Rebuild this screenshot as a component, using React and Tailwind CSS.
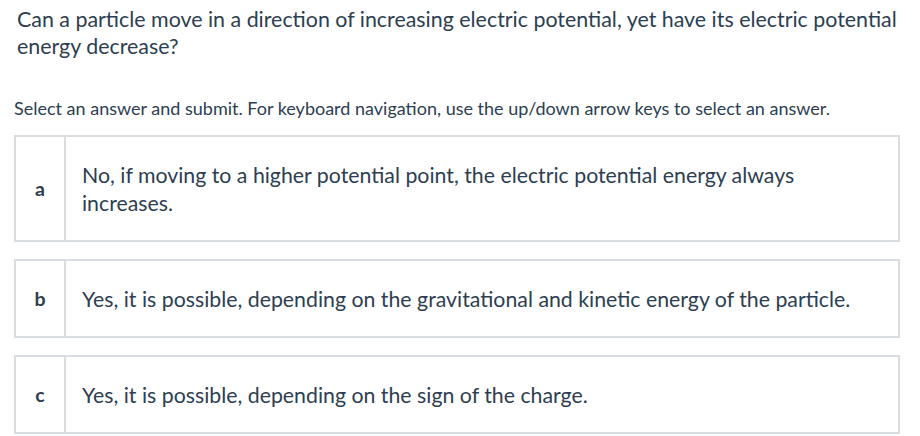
export default function App() {
    const answers = [
        { key: 'a', text: 'No, if moving to a higher potential point, the electric potential energy always increases.' },
        { key: 'b', text: 'Yes, it is possible, depending on the gravitational and kinetic energy of the particle.' },
        { key: 'c', text: 'Yes, it is possible, depending on the sign of the charge.' },
    ];

    return (
        <div className="w-[920px] h-[436px] bg-white text-[#2d3e50] overflow-hidden" style={{ fontFamily: 'Lato, "Open Sans", sans-serif' }}>
            <div className="pl-[17px] pr-4 pt-[6px] text-[21.4px] leading-[27px]">
                Can a particle move in a direction of increasing electric potential, yet have its electric potential energy decrease?
            </div>

            <p className="pl-[14px] mt-[38px] text-[18px] leading-[20px]">
                Select an answer and submit. For keyboard navigation, use the up/down arrow keys to select an answer.
            </p>

            <div className="mt-[17px] pl-[14px] w-[900px] flex flex-col gap-[17px]">
                {answers.map((a) => (
                    <div key={a.key} className="flex border-2 border-[#d9dde1] bg-white">
                        <div className="w-[50px] shrink-0 flex items-center justify-center border-r-2 border-[#d9dde1] font-bold text-[19.5px]">
                            {a.key}
                        </div>
                        <div className="pl-[16px] pr-[24px] py-[23.5px] text-[21.3px] leading-[28px]">
                            {a.text}
                        </div>
                    </div>
                ))}
            </div>
        </div>
    );
}
